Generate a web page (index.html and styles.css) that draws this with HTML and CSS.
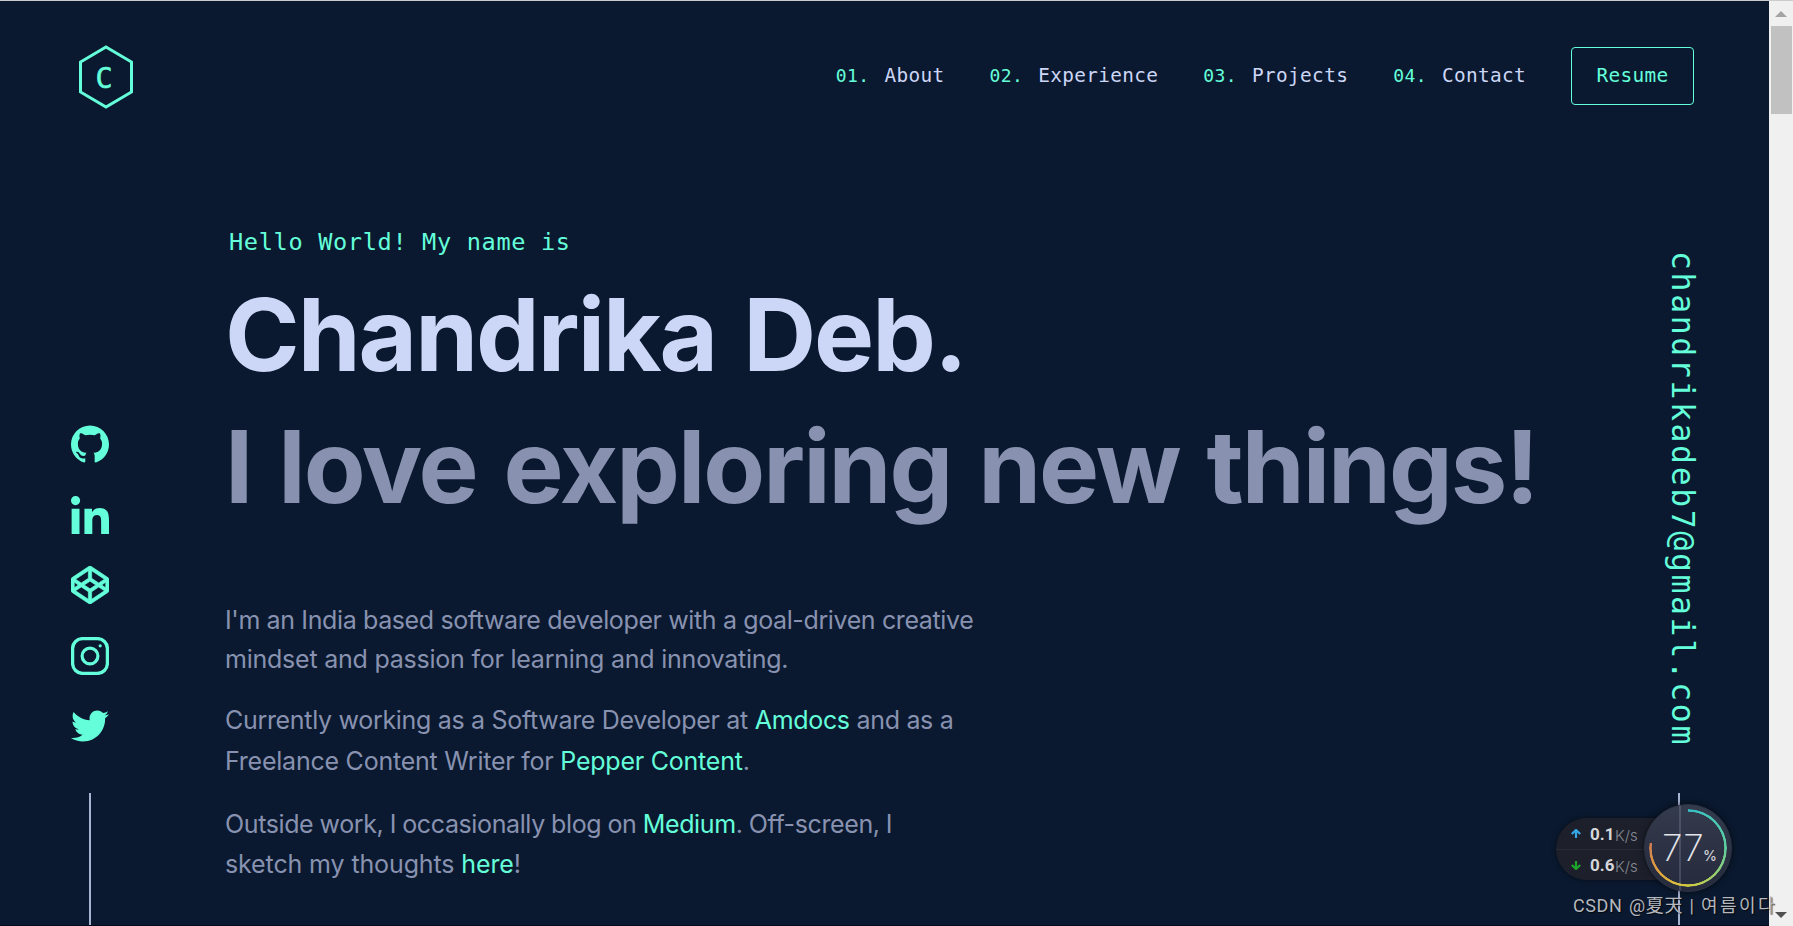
FILE: index.html
```html
<!DOCTYPE html>
<html lang="en">
<head>
  <meta charset="UTF-8" />
  <meta name="viewport" content="width=device-width, initial-scale=1.0"/>
  <title>Chandrika Deb</title>
  <link rel="stylesheet" href="styles.css">
</head>
<body>

  <div class="page">
    <header>
      <a class="logo" href="#">
        <svg width="56" height="64" viewBox="0 0 56 64">
          <polygon points="28,2 53.5,17 53.5,47 28,62 2.5,47 2.5,17" fill="none" stroke="#64ffda" stroke-width="3"/>
          <text x="17.5" y="42.5">C</text>
        </svg>
      </a>
      <nav>
        <a href="#about"><span class="num">01.</span>About</a>
        <a href="#experience"><span class="num">02.</span>Experience</a>
        <a href="#projects"><span class="num">03.</span>Projects</a>
        <a href="#contact"><span class="num">04.</span>Contact</a>
        <a href="#resume" class="resume">Resume</a>
      </nav>
    </header>

    <main>
      <!-- Social links -->
      <aside class="social">
        <a href="#"><svg viewBox="0 0 24 24"><path d="M12 .297c-6.63 0-12 5.373-12 12 0 5.303 3.438 9.8 8.205 11.385.6.113.82-.258.82-.577 0-.285-.01-1.04-.015-2.04-3.338.724-4.042-1.61-4.042-1.61C4.422 18.07 3.633 17.7 3.633 17.7c-1.087-.744.084-.729.084-.729 1.205.084 1.838 1.236 1.838 1.236 1.07 1.835 2.809 1.305 3.495.998.108-.776.417-1.305.76-1.605-2.665-.3-5.466-1.332-5.466-5.93 0-1.31.465-2.38 1.235-3.22-.135-.303-.54-1.523.105-3.176 0 0 1.005-.322 3.3 1.23.96-.267 1.98-.399 3-.405 1.02.006 2.04.138 3 .405 2.28-1.552 3.285-1.23 3.285-1.23.645 1.653.24 2.873.12 3.176.765.84 1.23 1.91 1.23 3.22 0 4.61-2.805 5.625-5.475 5.92.42.36.81 1.096.81 2.22 0 1.606-.015 2.896-.015 3.286 0 .315.21.69.825.57C20.565 22.092 24 17.592 24 12.297c0-6.627-5.373-12-12-12"/></svg></a>
        <a href="#"><svg viewBox="0 0 448 448"><path d="M100.28 448H7.4V148.9h92.88zM53.79 108.1C24.09 108.1 0 83.5 0 53.8a53.79 53.79 0 0 1 107.58 0c0 29.7-24.1 54.3-53.79 54.3zM447.9 448h-92.68V302.4c0-34.7-.7-79.2-48.29-79.2-48.29 0-55.69 37.7-55.69 76.7V448h-92.78V148.9h89.08v40.8h1.3c12.4-23.5 42.69-48.3 87.88-48.3 94 0 111.28 61.9 111.28 142.3V448z"/></svg></a>
        <a href="#"><svg viewBox="0 0 512 512"><path stroke="#64ffda" stroke-width="9" d="M502.285 159.704l-234-156c-7.987-4.915-16.511-4.96-24.571 0l-234 156C3.714 163.703 0 170.847 0 177.989v155.999c0 7.143 3.714 14.286 9.715 18.286l234 156.022c7.987 4.915 16.511 4.96 24.571 0l234-156.022c6-3.999 9.715-11.143 9.715-18.286V177.989c-.001-7.142-3.715-14.286-9.716-18.285zM278 63.131l172.286 114.858-76.857 51.429L278 165.703V63.131zm-44 0v102.572l-95.429 63.715-76.857-51.429L234 63.131zM44 219.132l55.143 36.857L44 292.847v-73.715zm190 229.715L61.714 333.989l76.857-51.429L234 346.275v102.572zm22-140.858l-77.715-52 77.715-52 77.715 52-77.715 52zm22 140.858V346.275l95.429-63.715 76.857 51.429L278 448.847zm190-156.001l-55.143-36.857L468 219.132v73.715z"/></svg></a>
        <a href="#"><svg viewBox="0 0 38 38"><rect x="1.6" y="1.6" width="34.8" height="34.8" rx="10" fill="none" stroke="#64ffda" stroke-width="3.3"/><circle cx="19" cy="19" r="7.9" fill="none" stroke="#64ffda" stroke-width="3.2"/><circle cx="29.2" cy="8.8" r="1.6"/></svg></a>
        <a href="#"><svg viewBox="0 0 512 512"><path d="M459.37 151.716c.325 4.548.325 9.097.325 13.645 0 138.72-105.583 298.558-298.558 298.558-59.452 0-114.68-17.219-161.137-47.106 8.447.974 16.568 1.299 25.34 1.299 49.055 0 94.213-16.568 130.274-44.832-46.132-.975-84.792-31.188-98.112-72.772 6.498.974 12.995 1.624 19.818 1.624 9.421 0 18.843-1.3 27.614-3.573-48.081-9.747-84.143-51.98-84.143-102.985v-1.299c13.969 7.797 30.214 12.67 47.431 13.319-28.264-18.843-46.781-51.005-46.781-87.391 0-19.492 5.197-37.36 14.294-52.954 51.655 63.675 129.3 105.258 216.365 109.807-1.624-7.797-2.599-15.918-2.599-24.04 0-57.828 46.782-104.934 104.934-104.934 30.213 0 57.502 12.67 76.67 33.137 23.715-4.548 46.456-13.32 66.599-25.34-7.798 24.366-24.366 44.833-46.132 57.827 21.117-2.273 41.584-8.122 60.426-16.243-14.292 20.791-32.161 39.308-52.628 54.253z"/></svg></a>
      </aside>

      <!-- Hero -->
      <section class="hero">
        <p class="hello">Hello World! My name is</p>
        <h1>Chandrika Deb.</h1>
        <h2>I love exploring new things!</h2>
        <p class="intro">
          <span class="tight">I'm an India based software developer with a goal-driven creative</span>
          <span>mindset and passion for learning and innovating.</span>
        </p>
        <p class="work">
          <span class="mid">Currently working as a Software Developer at <a href="#">Amdocs</a> and as a</span>
          <span>Freelance Content Writer for <a href="#">Pepper Content</a>.</span>
        </p>
        <p class="blog">
          <span class="tight">Outside work, I occasionally blog on <a href="#">Medium</a>. Off-screen, I</span>
          <span class="loose">sketch my thoughts <a href="#">here</a>!</span>
        </p>
      </section>

      <aside class="email">
        <a href="#">chandrikadeb7@gmail.com</a>
      </aside>
    </main>
  </div>

  <div class="scrollbar">
    <svg class="up" width="12" height="6"><path d="M0 6L6 0l6 6z" fill="#a3a3a3"/></svg>
    <div class="thumb"></div>
    <svg class="down" width="12" height="6"><path d="M0 0h12L6 6z" fill="#505050"/></svg>
  </div>

  <!-- Network speed widget -->
  <div class="widget">
    <div class="speeds">
      <div class="speed">
        <svg width="10" height="9" viewBox="0 0 10 9"><path d="M5 9V1.5M.8 5L5 1l4.2 4" fill="none" stroke="#35a7e6" stroke-width="2.2"/></svg>
        <b>0.1</b><span>K/s</span>
      </div>
      <div class="speed">
        <svg width="10" height="9" viewBox="0 0 10 9"><path d="M5 0v7.5M.8 4L5 8l4.2-4" fill="none" stroke="#1fa52b" stroke-width="2.2"/></svg>
        <b>0.6</b><span>K/s</span>
      </div>
    </div>
    <div class="gauge">
      <div class="ring"></div>
      <span class="pct">77</span><span class="sign">%</span>
    </div>
  </div>

  <div class="watermark">CSDN @夏天 | <span>여름이다</span></div>

</body>
</html>
```
FILE: styles.css
```css
* { box-sizing: border-box; }
body {
  display: flex; margin: 0; height: 926px; overflow: hidden;
  background: #0a192f; border-top: 1px solid #c8cccb;
  font-family: Inter, sans-serif; color: #8892b0;
}
a { color: #64ffda; text-decoration: none; }
p, h1, h2 { margin: 0; }

.page { flex: 1; display: flex; flex-direction: column; border-bottom: 1px solid #050b1c; }

header {
  display: flex; justify-content: space-between; align-items: center;
  height: 58px; margin-top: 46px; padding: 0 75px 0 78px;
  font-family: "DejaVu Sans Mono", monospace;
}
.logo { height: 64px; margin-top: 1px; }
.logo text { font-size: 28.5px; fill: #64ffda; stroke: #64ffda; stroke-width: 0.5px; }
nav { display: flex; align-items: center; font-size: 19.4px; line-height: 55px; letter-spacing: 0.34px; }
nav a { height: 58px; color: #ccd6f6; margin-right: 45px; padding-top: 1px; }
nav .num { color: #64ffda; font-size: 18px; letter-spacing: 0.4px; margin-right: 15px; }
nav .resume {
  width: 123px; margin-right: 0; padding-top: 0;
  border: 1px solid #64ffda; border-radius: 4px;
  color: #64ffda; text-align: center;
}

main { flex: 1; display: flex; min-height: 0; }

.social {
  display: flex; flex-direction: column; align-items: center;
  width: 180px; padding-top: 320px; gap: 32.5px;
}
.social a { height: 38px; }
.social svg { display: block; width: 38px; height: 38px; fill: #64ffda; }
.social::after { content: ""; width: 2px; flex: 1; margin-top: 15px; background: #a8b2d1; }

.hero { flex: 1; padding: 117px 0 0 45px; white-space: nowrap; }
.hello {
  padding-left: 4px; margin-bottom: 6px;
  font: 23.6px/40px "DejaVu Sans Mono", monospace;
  letter-spacing: 0.65px; color: #64ffda;
}
h1, h2 { font-size: 101px; font-weight: 700; line-height: 132px; word-spacing: 5px; }
h1 { color: #ccd6f6; letter-spacing: -2px; }
h2 { letter-spacing: -2px; }
.hero p span { display: block; letter-spacing: -0.23px; }
.hero p .tight { letter-spacing: -0.38px; }
.hero p .mid { letter-spacing: -0.31px; }
.hero p .loose { letter-spacing: -0.12px; }
.intro, .work, .blog { font-size: 25px; }
.intro { line-height: 39px; margin-top: 69px; }
.work { line-height: 41.3px; margin-top: 21px; }
.blog { line-height: 40px; margin-top: 21px; }
.blog .tight { word-spacing: -0.4px; }

.email {
  display: flex; flex-direction: column; align-items: center;
  width: 180px; padding-top: 146px;
}
.email a {
  writing-mode: vertical-rl; height: 496px; margin-left: 7px;
  font: 31.5px/38px "DejaVu Sans Mono", monospace; letter-spacing: 2.6px;
}
.email::after { content: ""; width: 2px; flex: 1; margin-top: 46px; background: #a8b2d1; }

.scrollbar {
  display: flex; flex-direction: column; align-items: center;
  width: 24px; padding: 10px 0 8px; background: #f0f0f0;
}
.thumb { width: 21px; height: 88px; margin-top: 9px; background: #c1c1c1; }
.down { margin-top: auto; }

.widget { position: absolute; left: 1556px; top: 804px; width: 176px; height: 88px; }
.speeds {
  position: absolute; left: 0; top: 14px; width: 130px; height: 62px;
  border-radius: 31px; background: #1d202b; box-shadow: 0 0 5px rgba(0, 0, 0, 0.5);
}
.speed { display: flex; align-items: center; height: 31px; padding-left: 15px; }
.speed + .speed { border-top: 1px solid #282b36; }
.speed b { margin-left: 9px; width: 25px; font: 700 17px Roboto, sans-serif; color: #d5d7da; }
.speed span { font: 300 15px Inter, sans-serif; color: #858993; padding-top: 3px; }
.gauge {
  position: absolute; right: 0; top: 0; width: 88px; height: 88px; border-radius: 50%;
  background:
    linear-gradient(rgba(168, 178, 209, 0.22), rgba(168, 178, 209, 0.22)) 34px 0 / 2px 88px no-repeat,
    linear-gradient(#343b4d, #252a3c);
  border: 1px solid #2c3343; box-shadow: 0 0 6px rgba(0, 0, 0, 0.6);
}
.ring {
  position: absolute; left: 4px; top: 4px; width: 78px; height: 78px; border-radius: 50%;
  background: conic-gradient(#35bfc4, #5fd0a0 25%, #d2cc3e 50%, #e0a53e 63%, #cf7d50 77%, transparent 77%);
  -webkit-mask: radial-gradient(circle, transparent 36px, #000 36.6px);
  mask: radial-gradient(circle, transparent 36px, #000 36.6px);
}
.pct { position: absolute; left: 17px; top: 21px; font: 200 37px/44px Inter, sans-serif; color: #e4e5ea; }
.sign { position: absolute; left: 58px; top: 41px; font: 500 14px/20px Inter, sans-serif; color: #d0d2d8; }

.watermark {
  position: absolute; left: 1573px; top: 893px; white-space: nowrap;
  font: 18px/26px Roboto, "Noto Sans CJK KR", sans-serif; letter-spacing: 0.6px; word-spacing: 1.5px;
  color: #b4b7bd; text-shadow: 1px 1px 1px rgba(0, 0, 0, 0.7);
}
.watermark span { letter-spacing: 2.4px; }
```
